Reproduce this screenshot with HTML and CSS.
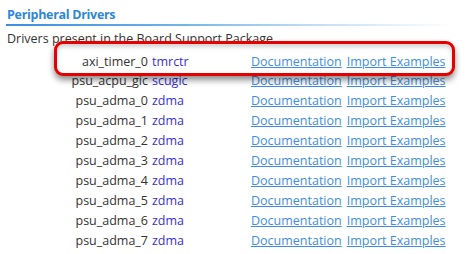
FILE: index.html
```html
<!DOCTYPE html>
<html>
<head>
<meta charset="utf-8">
<link rel="stylesheet" href="styles.css">
</head>
<body>
<div class="page">
  <div class="header">
    <div class="title">Peripheral Drivers</div>
    <div class="rule"></div>
  </div>
  <div class="intro">Drivers present in the Board Support Package</div>
  <div class="table">
    <div class="row covered"><span class="name">axi_timer_0</span><span class="drv">tmrctr</span><span class="links"><a>Documentation</a><a>Import Examples</a></span></div>
    <div class="row"><span class="name">psu_acpu_gic</span><span class="drv">scugic</span><span class="links"><a>Documentation</a><a>Import Examples</a></span></div>
    <div class="row"><span class="name">psu_adma_0</span><span class="drv">zdma</span><span class="links"><a>Documentation</a><a>Import Examples</a></span></div>
    <div class="row"><span class="name">psu_adma_1</span><span class="drv">zdma</span><span class="links"><a>Documentation</a><a>Import Examples</a></span></div>
    <div class="row"><span class="name">psu_adma_2</span><span class="drv">zdma</span><span class="links"><a>Documentation</a><a>Import Examples</a></span></div>
    <div class="row"><span class="name">psu_adma_3</span><span class="drv">zdma</span><span class="links"><a>Documentation</a><a>Import Examples</a></span></div>
    <div class="row"><span class="name">psu_adma_4</span><span class="drv">zdma</span><span class="links"><a>Documentation</a><a>Import Examples</a></span></div>
    <div class="row"><span class="name">psu_adma_5</span><span class="drv">zdma</span><span class="links"><a>Documentation</a><a>Import Examples</a></span></div>
    <div class="row"><span class="name">psu_adma_6</span><span class="drv">zdma</span><span class="links"><a>Documentation</a><a>Import Examples</a></span></div>
    <div class="row"><span class="name">psu_adma_7</span><span class="drv">zdma</span><span class="links"><a>Documentation</a><a>Import Examples</a></span></div>
  </div>
  <div class="callout">
    <div class="row"><span class="name">axi_timer_0</span><span class="drv">tmrctr</span><span class="links"><a>Documentation</a><a>Import Examples</a></span></div>
  </div>
</div>
</body>
</html>
```
FILE: styles.css
```css
html, body {
  margin: 0;
  padding: 0;
  background: #ffffff;
}
body {
  font-family: "Open Sans", "Noto Sans", "Liberation Sans", sans-serif;
  font-size: 12.5px;
  color: #333333;
}
.page {
  position: relative;
  width: 476px;
  height: 254px;
  overflow: hidden;
}
.header {
  padding: 6px 0 0 6px;
}
.title {
  font-weight: bold;
  color: #2f86d8;
  line-height: 18px;
  padding-left: 1px;
  letter-spacing: -0.3px;
}
.rule {
  height: 2px;
  width: 448px;
  background: linear-gradient(to right, #3a8fe0 0%, #69aee8 35%, #b9d9f3 65%, rgba(255,255,255,0) 100%);
}
.intro {
  padding-left: 7px;
  line-height: 20px;
  margin-top: 3px;
}
.table {
  display: flex;
  flex-direction: column;
  margin-top: 2px;
}
.row {
  display: grid;
  grid-template-columns: 148px 95px auto;
  column-gap: 4px;
  height: 20px;
  line-height: 20px;
  white-space: nowrap;
}
.row.covered {
  visibility: hidden;
}
.name {
  text-align: right;
}
.drv {
  color: #3a2fd6;
}
.links {
  display: flex;
  gap: 5px;
}
.links a {
  color: #3f8ee0;
  text-decoration: underline;
}
.callout {
  position: absolute;
  left: 54px;
  top: 41px;
  width: 401px;
  height: 35px;
  box-sizing: border-box;
  border: 3px solid #e60000;
  border-radius: 9px;
  background: #ffffff;
  box-shadow: 0 4px 6px rgba(0,0,0,0.45), inset 0 3px 4px rgba(0,0,0,0.18);
}
.callout .row {
  margin-left: -57px;
  margin-top: 8px;
}
```
